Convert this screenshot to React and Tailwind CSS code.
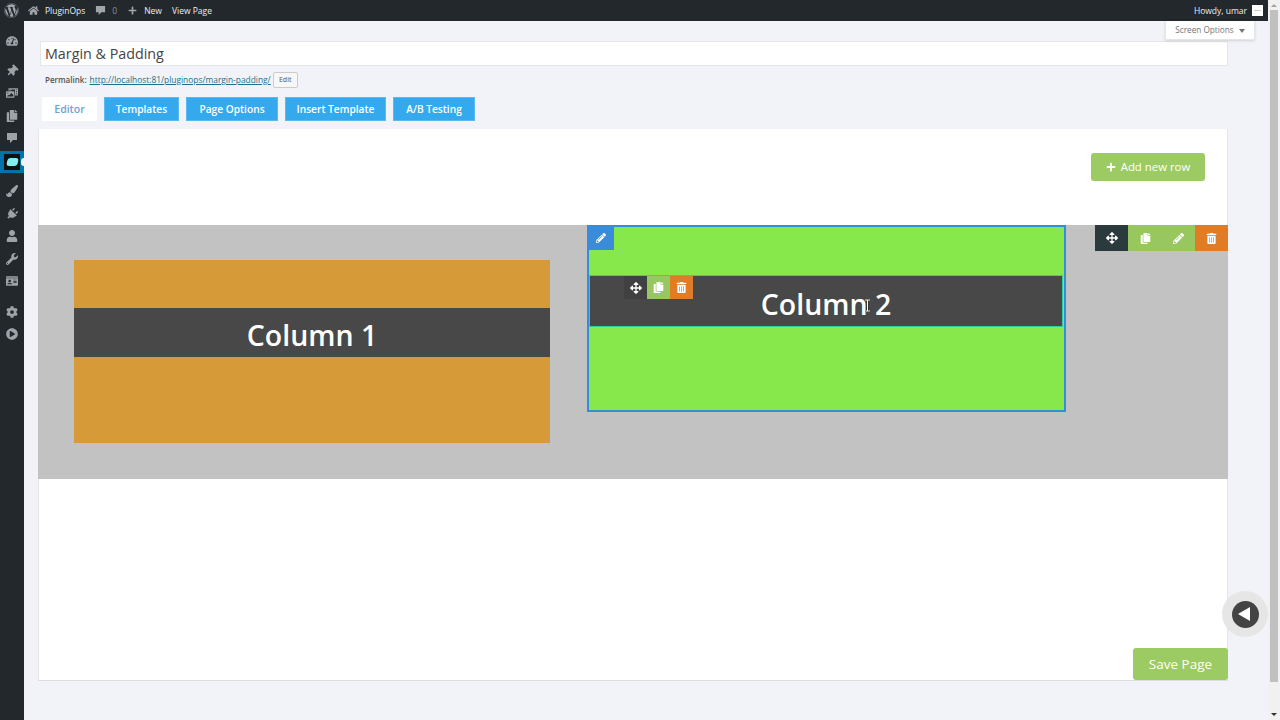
import { FaWordpress, FaHome, FaPlus, FaTachometerAlt, FaThumbtack, FaPhotoVideo, FaCopy, FaPaintBrush, FaPlug, FaUser, FaWrench, FaCog, FaPlayCircle, FaArrowsAlt, FaPencilAlt, FaTrashAlt, FaIdCard } from 'react-icons/fa';

function BubbleIcon({ size = 12, className = '' }) {
  return (
    <svg className={className} width={size} height={size} viewBox="0 0 12 12" fill="currentColor">
      <path d="M1 1h10v7H7l-3 3V8H1z" />
    </svg>
  );
}

function SideIcon({ icon: Icon, className = '', iconClass = '' }) {
  return (
    <div className={`h-[22.5px] flex items-center justify-center text-[#9ea3a8] ${className}`}>
      <Icon size={12} className={iconClass} />
    </div>
  );
}

function Sidebar() {
  return (
    <div className="w-6 shrink-0 bg-[#23282d] flex flex-col pt-[9px]">
      <SideIcon icon={FaTachometerAlt} />
      <SideIcon icon={FaThumbtack} className="mt-[7px]" iconClass="rotate-45" />
      <SideIcon icon={FaPhotoVideo} />
      <SideIcon icon={FaCopy} />
      <SideIcon icon={BubbleIcon} />
      <div className="relative h-[22px] mt-[1.5px] bg-[#0073aa] flex items-center justify-center">
        <div className="w-4 h-4 bg-[#111] flex items-center justify-center">
          <div className="w-[11px] h-[8px] rounded-[3px] bg-[#7ff0ee] -skew-x-12" />
        </div>
        <div className="absolute right-0 top-[7px] w-[3px] h-2 rounded-l-full bg-[#f1f3f8]" />
      </div>
      <SideIcon icon={FaPaintBrush} className="mt-[7px]" />
      <SideIcon icon={FaPlug} iconClass="rotate-45" />
      <SideIcon icon={FaUser} />
      <SideIcon icon={FaWrench} />
      <SideIcon icon={FaIdCard} />
      <SideIcon icon={FaCog} className="mt-2" />
      <SideIcon icon={FaPlayCircle} />
    </div>
  );
}

function AdminBar() {
  return (
    <div className="h-[21px] shrink-0 bg-[#23282d] flex items-center text-[8.5px] text-[#eeeeee]">
      <FaWordpress size={15} className="ml-1 text-[#a0a5aa]" />
      <FaHome size={11} className="ml-[9px] text-[#a0a5aa]" />
      <span className="ml-[6px] pt-px">PluginOps</span>
      <BubbleIcon size={11} className="ml-[10px] text-[#a0a5aa]" />
      <span className="ml-[6px] pt-px text-[#8a8f94]">0</span>
      <FaPlus size={9} className="ml-[11px] text-[#a0a5aa]" />
      <span className="ml-[7px] pt-px">New</span>
      <span className="ml-[10px] pt-px">View Page</span>
      <span className="ml-auto pt-px">Howdy, umar</span>
      <div className="ml-[5px] mr-[5px] w-[11px] h-[11px] bg-white flex items-center justify-center">
        <div className="w-[7px] h-px bg-[#cccccc]" />
      </div>
    </div>
  );
}

function Tab({ className, children }) {
  return (
    <div className={`h-6 pt-px flex items-center justify-center bg-[#35a9ee] border border-[#5cb8ee] text-white text-[10.2px] font-semibold ${className}`}>
      {children}
    </div>
  );
}

function ToolButton({ className, icon: Icon, size = 11 }) {
  return (
    <div className={`flex items-center justify-center text-white ${className}`}>
      <Icon size={size} />
    </div>
  );
}

function Band({ className, children }) {
  return (
    <div className={`bg-[#484848] flex items-center justify-center text-white text-[28.5px] font-semibold pt-[6px] ${className}`}>
      {children}
    </div>
  );
}

function BuilderRow() {
  return (
    <div className="relative h-[254px] mt-[44px] -mx-px bg-[#c2c2c2] flex items-start pl-9 gap-[37px]">
      <div className="w-[476px] h-[183px] mt-[35px] bg-[#d69a38] pt-12">
        <Band className="h-[49px]">Column 1</Band>
      </div>

      <div className="relative w-[479px] h-[187px] border-2 border-[#2f8fd8] bg-[#86e84b] pt-[48px]">
        <div className="absolute left-[-2px] top-[-1px] w-[27px] h-6">
          <ToolButton className="w-full h-full bg-[#3a8bd8]" icon={FaPencilAlt} size={10} />
        </div>
        <Band className="h-[52px] mr-px border border-[#2fd0a0]">Column 2</Band>
        <div className="absolute left-[35px] top-[49px] h-[23px] flex">
          <ToolButton className="w-[23px] bg-[#404040]" icon={FaArrowsAlt} size={12} />
          <ToolButton className="w-[23px] bg-[#98c760]" icon={FaCopy} />
          <ToolButton className="w-[23px] bg-[#e07b26]" icon={FaTrashAlt} />
        </div>
        <svg className="absolute left-[275px] top-[72px]" width="7" height="13" viewBox="0 0 7 13">
          <path d="M1 1h5M1 12h5M3.5 1v11" stroke="#222" strokeWidth="2" />
          <path d="M1 1h5M1 12h5M3.5 1v11" stroke="#fff" strokeWidth="1" />
        </svg>
      </div>

      <div className="absolute right-0 top-0 h-[26px] flex">
        <ToolButton className="w-[33px] bg-[#2b3a3c]" icon={FaArrowsAlt} size={12} />
        <ToolButton className="w-[34px] bg-[#98c760]" icon={FaCopy} />
        <ToolButton className="w-[33px] bg-[#98c760]" icon={FaPencilAlt} />
        <ToolButton className="w-[33px] bg-[#e07b26]" icon={FaTrashAlt} />
      </div>
    </div>
  );
}

function Scrollbar() {
  return (
    <div className="w-3 shrink-0 bg-[#f1f1f1] flex flex-col items-start">
      <div className="h-[10px] w-full flex items-center justify-center">
        <div className="w-0 h-0 border-x-[3px] border-x-transparent border-b-[3px] border-b-[#a3a3a3]" />
      </div>
      <div className="ml-[2px] w-2 h-[672px] bg-[#c0c0c0]" />
      <div className="mt-auto h-[11px] w-full flex items-center justify-center">
        <div className="w-0 h-0 border-x-[3px] border-x-transparent border-t-[3px] border-t-[#333333]" />
      </div>
    </div>
  );
}

export default function App() {
  return (
    <div className="relative w-[1280px] h-screen overflow-hidden flex bg-[#f1f3f8] font-['Open_Sans',sans-serif]">
      <div className="w-[1268px] flex flex-col shrink-0">
        <AdminBar />
        <div className="flex flex-1 min-h-0">
          <Sidebar />
          <div className="relative flex-1 pl-[14px] pr-[40px]">
            <div className="ml-[2px] mt-5 h-[25px] bg-white border border-[#e5e5e5] flex items-center pl-1 text-[14.3px] text-[#444]">
              Margin &amp; Padding
            </div>

            <div className="absolute right-[13px] top-0 w-[90px] h-[19px] pt-px bg-white border border-t-0 border-[#e5e5e5] flex items-center justify-center gap-[5px] text-[8.2px] text-[#72777c] shadow-sm">
              <span className="whitespace-nowrap">Screen Options</span>
              <div className="w-0 h-0 border-x-[3px] border-x-transparent border-t-[4px] border-t-[#72777c]" />
            </div>

            <div className="ml-[7px] mt-[6px] h-[16px] flex items-center text-[8.4px] text-[#555]">
              <span className="font-semibold text-[8px]">Permalink:</span>
              <a className="ml-[3px] text-[#1a7288] underline">http://localhost:81/pluginops/margin-padding/</a>
              <div className="ml-[2px] h-4 w-[25px] flex items-center justify-center bg-[#f7f7f7] border border-[#cccccc] rounded-[2px] text-[7px]">Edit</div>
            </div>

            <div className="ml-1 mt-[9px] flex gap-[7px]">
              <div className="h-6 w-[55px] pt-px flex items-center justify-center bg-white text-[#62a6d6] text-[10.5px] font-semibold">Editor</div>
              <Tab className="w-[75px]">Templates</Tab>
              <Tab className="w-[92px]">Page Options</Tab>
              <Tab className="w-[101px]">Insert Template</Tab>
              <Tab className="w-[82px]">A/B Testing</Tab>
            </div>

            <div className="mt-2 h-[552px] bg-white border-x border-[#e5e5e5] flex flex-col">
              <div className="pt-6 pr-[22px] flex justify-end">
                <div className="w-[114px] h-7 rounded-[3px] bg-[#9ccb63] flex items-center justify-center gap-[5px] text-white text-[11.4px]">
                  <FaPlus size={10} />
                  <span>Add new row</span>
                </div>
              </div>
              <BuilderRow />
              <div className="mt-auto -mr-px flex justify-end">
                <div className="w-[95px] h-[32px] pt-px rounded-[3px] bg-[#9ccb63] flex items-center justify-center text-white text-[13.5px]">Save Page</div>
              </div>
              <div className="h-px bg-[#dddddd]" />
            </div>

            <div className="absolute left-[1198px] top-[570px] w-[46px] h-[46px] rounded-full bg-[#e6e6e6] flex items-center justify-center">
              <div className="w-[27px] h-[27px] rounded-full bg-[#444444] flex items-center justify-center">
                <div className="mr-[2px] w-0 h-0 border-y-[7px] border-y-transparent border-r-[12px] border-r-white" />
              </div>
            </div>
          </div>
        </div>
      </div>
      <Scrollbar />
    </div>
  );
}
